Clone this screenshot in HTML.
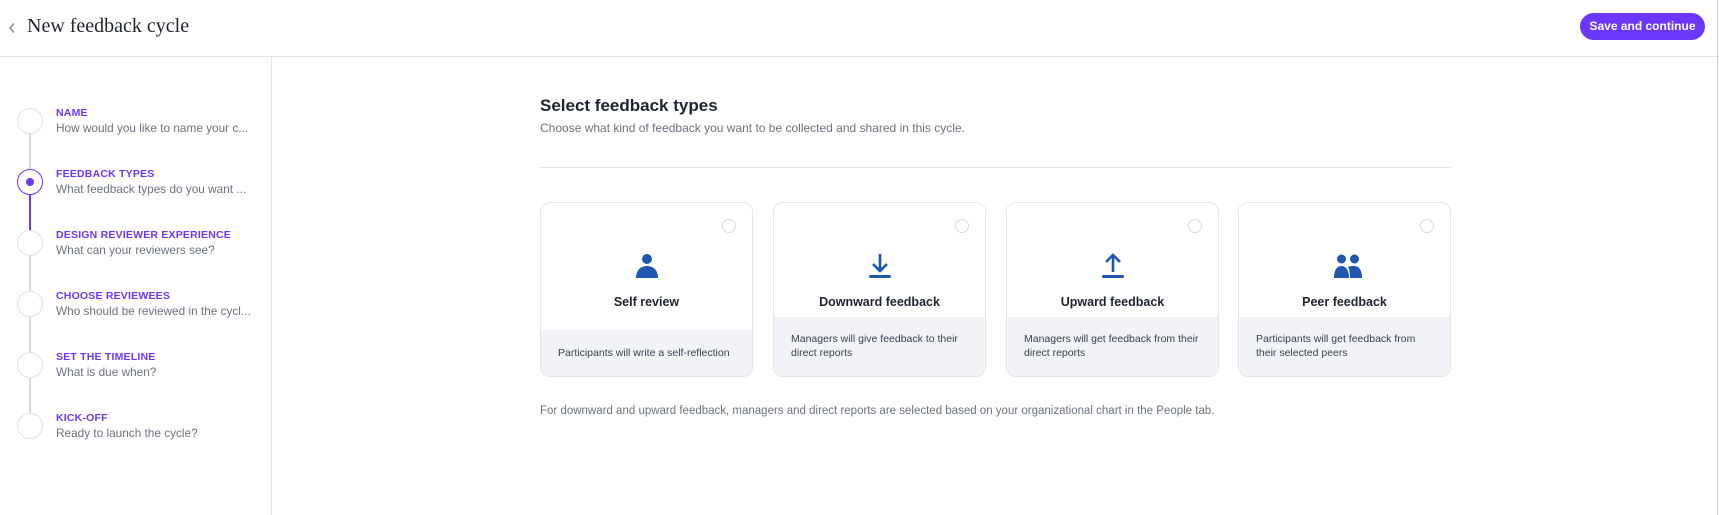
<!DOCTYPE html>
<html><head><meta charset="utf-8"><style>
*{box-sizing:border-box;margin:0;padding:0}
body{width:1719px;height:515px;background:#fff;font-family:"Liberation Sans",sans-serif;position:relative;overflow:hidden;color:#1f2937}
.hdr{position:absolute;left:0;top:0;width:1719px;height:57px;border-bottom:1px solid #e3e5ea}
.title{position:absolute;left:27px;top:15px;font-family:"Liberation Serif",serif;font-size:20px;color:#1f2433}
.btn{position:absolute;left:1580px;top:13px;width:125px;height:27px;border-radius:14px;background:#6b38fb;color:#fff;font-size:12px;font-weight:bold;text-align:center;line-height:27px;white-space:nowrap}
.rb{position:absolute;left:1717px;top:0;width:1px;height:515px;background:#ccc}
.side{position:absolute;left:271px;top:57px;width:1px;height:458px;background:#e3e5ea}
.line{position:absolute;left:29px;width:2px;background:#d6dbe2}
.circ{position:absolute;left:17px;width:26px;height:26px;border-radius:50%;border:1.5px solid #dfe3e8;background:#fff}
.lab{position:absolute;left:56px;font-size:10.5px;font-weight:bold;color:#6b38fb;letter-spacing:.2px}
.sub{position:absolute;left:56px;font-size:11.8px;color:#6b7280;white-space:nowrap}
.h1{position:absolute;left:540px;top:96px;font-size:17px;font-weight:bold;color:#1f2433}
.p{position:absolute;left:540px;font-size:12px;color:#6b7280}
.div{position:absolute;left:540px;top:167px;width:911px;height:1px;background:#e3e5ea}
.card{position:absolute;top:202px;width:213px;height:175px;border:1px solid #e3e5ea;border-radius:10px;overflow:hidden;background:#fff}
.card .r{position:absolute;right:16px;top:16px;width:14px;height:14px;border-radius:50%;border:1px solid #d6dbe2}
.card svg{position:absolute;left:94px;top:50px}
.card .t{position:absolute;left:0;width:100%;top:92px;text-align:center;font-size:12.5px;font-weight:bold;color:#1f2433}
.card .d{position:absolute;left:0;bottom:0;width:100%;background:#f2f3f7;padding:0 17px;font-size:10.5px;line-height:13.5px;color:#374151}
</style></head><body>
<div class="hdr"></div>
<svg style="position:absolute;left:7px;top:21px" width="10" height="14" viewBox="0 0 10 14"><path d="M7 2.5 L3 7 L7 11.5" fill="none" stroke="#8a94a6" stroke-width="1.6"/></svg>
<div class="title">New feedback cycle</div>
<div class="btn">Save and continue</div>
<div class="rb"></div>
<div class="side"></div>
<div class="line" style="top:134px;height:48px"></div>
<div class="line" style="top:195px;height:50px;background:#6b38fb"></div>
<div class="line" style="top:256px;height:183px"></div>
<div class="circ" style="top:108px"></div>
<div class="circ" style="top:169px;border-color:#6b38fb"><div style="position:absolute;left:7.5px;top:7.5px;width:8px;height:8px;border-radius:50%;background:#6b38fb"></div></div>
<div class="circ" style="top:230px"></div>
<div class="circ" style="top:291px"></div>
<div class="circ" style="top:352px"></div>
<div class="circ" style="top:413px"></div>
<div class="lab" style="top:107px">NAME</div><div class="sub" style="top:121px">How would you like to name your c...</div>
<div class="lab" style="top:168px">FEEDBACK TYPES</div><div class="sub" style="top:182px">What feedback types do you want ...</div>
<div class="lab" style="top:229px">DESIGN REVIEWER EXPERIENCE</div><div class="sub" style="top:243px">What can your reviewers see?</div>
<div class="lab" style="top:290px">CHOOSE REVIEWEES</div><div class="sub" style="top:304px">Who should be reviewed in the cycl...</div>
<div class="lab" style="top:351px">SET THE TIMELINE</div><div class="sub" style="top:365px">What is due when?</div>
<div class="lab" style="top:412px">KICK-OFF</div><div class="sub" style="top:426px">Ready to launch the cycle?</div>

<div class="h1">Select feedback types</div>
<div class="p" style="top:121px">Choose what kind of feedback you want to be collected and shared in this cycle.</div>
<div class="div"></div>

<div class="card" style="left:540px"><div class="r"></div>
<svg width="24" height="26" viewBox="0 0 24 26"><circle cx="12" cy="6" r="5" fill="#1e56b0"/><path d="M1 25 C1 17 6 13 12 13 C18 13 23 17 23 25Z" fill="#1e56b0"/></svg>
<div class="t">Self review</div><div class="d" style="height:46px;padding-top:17px">Participants will write a self-reflection</div></div>

<div class="card" style="left:773px"><div class="r"></div>
<svg width="24" height="26" viewBox="0 0 24 26"><path d="M12 1 V18 M5 11 L12 18 L19 11" fill="none" stroke="#1e56b0" stroke-width="2.6"/><rect x="1" y="22" width="22" height="3" rx="1.5" fill="#1e56b0"/></svg>
<div class="t">Downward feedback</div><div class="d" style="height:59px;padding-top:16px">Managers will give feedback to their direct reports</div></div>

<div class="card" style="left:1006px"><div class="r"></div>
<svg width="24" height="26" viewBox="0 0 24 26"><path d="M12 19 V2 M5 9 L12 2 L19 9" fill="none" stroke="#1e56b0" stroke-width="2.6"/><rect x="1" y="22" width="22" height="3" rx="1.5" fill="#1e56b0"/></svg>
<div class="t">Upward feedback</div><div class="d" style="height:59px;padding-top:16px">Managers will get feedback from their direct reports</div></div>

<div class="card" style="left:1238px"><div class="r"></div>
<svg width="30" height="26" viewBox="0 0 30 26"><circle cx="8.5" cy="6" r="4.5" fill="#1e56b0"/><circle cx="21.5" cy="6" r="4.5" fill="#1e56b0"/><path d="M1 25 C1 17 4 13 8.5 13 C13 13 16 17 16 25Z" fill="#1e56b0"/><path d="M17 25 C17 19 16 15 15 14 C17 13 19 13 21.5 13 C26 13 29 17 29 25Z" fill="#1e56b0"/></svg>
<div class="t">Peer feedback</div><div class="d" style="height:59px;padding-top:16px">Participants will get feedback from their selected peers</div></div>

<div class="p" style="top:405px;font-size:11.5px">For downward and upward feedback, managers and direct reports are selected based on your organizational chart in the People tab.</div>
</body></html>
